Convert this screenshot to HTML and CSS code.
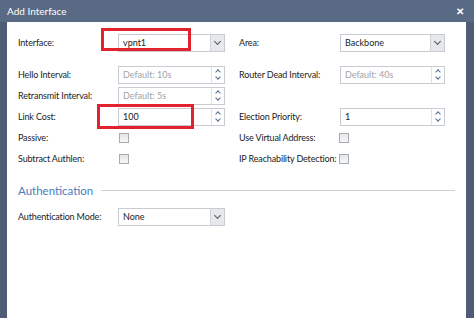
FILE: index.html
```html
<!doctype html>
<html><head><meta charset="UTF-8"><link rel="stylesheet" href="styles.css"></head>
<body>
  <div class="fenetre">
    <div class="titre"><span>Add Interface</span><span class="fermer">&#x2715;</span></div>
    <div class="contenu">
      <div class="grille">
        <div class="lab">Interface:</div>
        <div class="champ"><div class="select"><span>vpnt1</span><i class="fleche"></i></div><div class="cadre c1"></div></div>
        <div></div>
        <div class="lab">Area:</div>
        <div class="champ"><div class="select"><span>Backbone</span><i class="fleche"></i></div></div>

        <div class="lab espace">Hello Interval:</div>
        <div class="champ espace"><div class="spin"><span class="vide">Default: 10s</span><i class="fleches"></i></div></div>
        <div class="espace"></div>
        <div class="lab espace">Router Dead Interval:</div>
        <div class="champ espace"><div class="spin"><span class="vide">Default: 40s</span><i class="fleches"></i></div></div>

        <div class="lab">Retransmit Interval:</div>
        <div class="champ"><div class="spin"><span class="vide">Default: 5s</span><i class="fleches"></i></div></div>
        <div></div><div></div><div></div>

        <div class="lab">Link Cost:</div>
        <div class="champ"><div class="spin"><span>100</span><i class="fleches"></i></div><div class="cadre c2"></div></div>
        <div></div>
        <div class="lab">Election Priority:</div>
        <div class="champ"><div class="spin"><span>1</span><i class="fleches"></i></div></div>

        <div class="lab">Passive:</div>
        <div class="champ"><i class="case"></i></div>
        <div></div>
        <div class="lab">Use Virtual Address:</div>
        <div class="champ"><i class="case droite"></i></div>

        <div class="lab">Subtract Authlen:</div>
        <div class="champ"><i class="case"></i></div>
        <div></div>
        <div class="lab">IP Reachability Detection:</div>
        <div class="champ"><i class="case droite"></i></div>
      </div>

      <div class="section"><span>Authentication</span><hr></div>

      <div class="grille">
        <div class="lab">Authentication Mode:</div>
        <div class="champ"><div class="select"><span>None</span><i class="fleche"></i></div></div>
      </div>
    </div>
  </div>
</body></html>
```
FILE: styles.css
```css
* {box-sizing: border-box;}
body {margin:0;width:474px;height:318px;overflow:hidden;background:#4e5d75;font-family:Lato,"Open Sans",sans-serif;font-size:9px;color:#222;}
.fenetre {height:318px;display:flex;flex-direction:column;}
.titre {height:22px;display:flex;justify-content:space-between;align-items:center;padding:0 10px 0 7px;background:#586a84;color:white;font-size:10px;}
.fermer {font-size:10px;font-weight:bold;}
.contenu {flex:1;background:white;margin:0 8px 0 7px;padding-top:10px;}
.grille {display:grid;grid-template-columns:100px 107px 14px 101px 105px;grid-template-rows:21px 32px;grid-auto-rows:21px;padding-left:11px;}
.lab {display:flex;align-items:center;white-space:nowrap;letter-spacing:-0.15px;}
.champ {display:flex;align-items:center;position:relative;}
.espace {align-self:end;height:21px;}
.select,.spin {width:100%;height:18px;border:1px solid #c8ccd2;display:flex;align-items:center;justify-content:space-between;padding-left:4px;background:white;}
.vide {color:#a0a4a8;}
.fleche {width:14px;height:16px;background:#e6e8eb;border-left:1px solid #cfd3d8;position:relative;}
.fleche::after {content:"";position:absolute;left:4px;top:4px;width:4px;height:4px;border-right:1.5px solid #4d5866;border-bottom:1.5px solid #4d5866;transform:rotate(45deg);}
.fleches {width:13px;height:16px;position:relative;border-left:1px solid #e0e3e6;}
.fleches::before,.fleches::after {content:"";position:absolute;left:4px;width:3px;height:3px;border-left:1.5px solid #4f6c93;border-top:1.5px solid #4f6c93;}
.fleches::before {top:3px;transform:rotate(45deg);}
.fleches::after {top:8px;transform:rotate(225deg);}
.case {display:block;width:10px;height:10px;margin-left:1px;border:1px solid #a8acb2;background:linear-gradient(#e4e6e9,#f6f7f8);}
.case.droite {margin-left:-1px;}
.cadre {position:absolute;border:3px solid #e2222c;}
.c1 {left:-17px;top:-4px;width:90px;height:23px;}
.c2 {left:-21px;top:-2px;width:97px;height:25px;}
.section {display:flex;align-items:center;gap:8px;margin:11px 11px 6px 11px;height:20px;}
.section span {color:#4a7cba;font-size:11.5px;}
.section hr {flex:1;border:0;border-top:1px solid #cdd1d6;margin:0;}
```
